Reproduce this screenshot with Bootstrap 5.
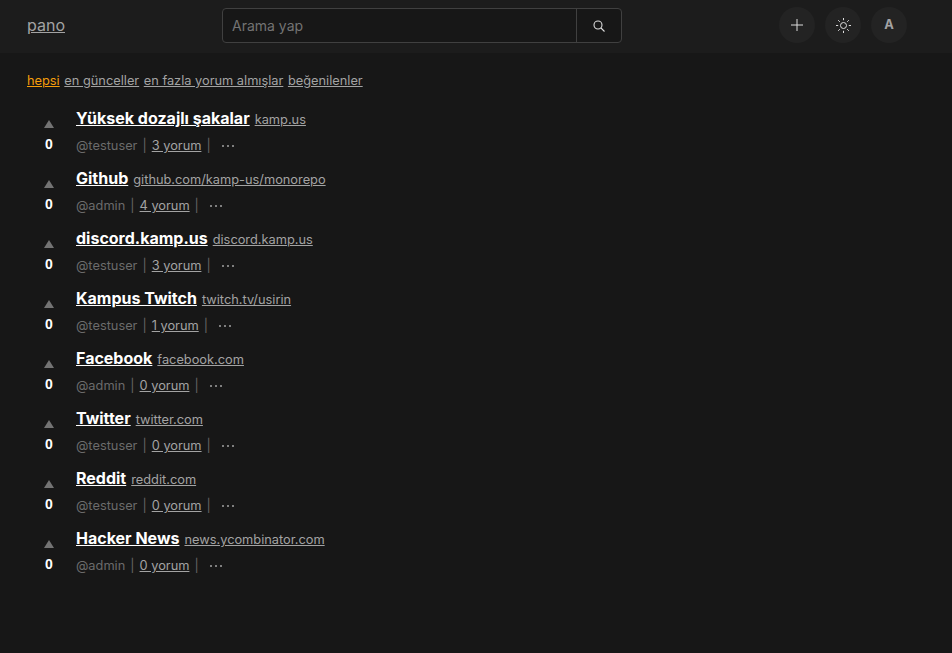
<!doctype html>
<html lang="tr" data-bs-theme="dark">
<head>
<meta charset="utf-8">
<link href="https://cdn.jsdelivr.net/npm/bootstrap@5.3.0/dist/css/bootstrap.min.css" rel="stylesheet">
<style>
body{background:#171717;color:#ddd;font-family:Inter,"Liberation Sans",sans-serif;font-size:14px;min-height:653px}
a{color:#a3a3a3}
.topbar{height:53px;background:#1c1c1c;padding:8px 45px 10px 27px}
.brand{font-size:16px;line-height:35px;color:#a3a3a3;width:195px}
.searchbox{width:400px;height:35px;border:1px solid #404040;border-radius:4px;background:#171717;overflow:hidden}
.searchbox input{background:transparent;border:0;outline:0;color:#ddd;font-size:14px;padding:0 9px;height:33px;min-width:0}
.searchbox input::placeholder{color:#737373;opacity:1}
.searchbtn{width:45px;border-left:1px solid #404040;color:#ddd}
.actions{gap:10px;margin-top:-1px}
.roundbtn{width:36px;height:36px;border-radius:50%;background:#232323;border:0;padding:0;color:#ddd}
.avatarletter{font-size:12.8px;font-weight:700;color:#a3a3a3}
.content{padding:20px 27px 0}
.filters{font-size:12.8px;line-height:16px;gap:4.6px;height:16px}
.active-filter{color:#f59e0b}
.postlist{margin-top:14px}
.post{height:60px}
.votes{width:44px;margin-right:5px;color:#fff;font-family:"Liberation Sans",sans-serif;font-size:14px;font-weight:700;line-height:17px}
.uparrow{width:0;height:0;border-left:5.5px solid transparent;border-right:5.5px solid transparent;border-bottom:8px solid #737373;margin-top:17px;margin-bottom:8px}
.posttitle{font-size:16px;font-weight:700;color:#fff;line-height:20px}
.posthost{font-size:12.8px;color:#a3a3a3}
.titleline{height:20px;gap:5px;margin-top:5px}
.metaline{height:16px;margin-top:10px;font-size:12.8px;line-height:16px}
.author{color:#6b6b6b}
.commentlink{color:#a3a3a3}
.sep{margin:0 5px;color:#666}
.dots{margin-left:5px;color:#a3a3a3}
</style>
</head>
<body>
<header class="topbar d-flex align-items-start">
  <div class="brand"><a href="#">pano</a></div>
  <div class="searchbox d-flex">
    <input class="flex-grow-1" placeholder="Arama yap">
    <div class="searchbtn d-flex align-items-center justify-content-center">
      <svg width="12" height="12" viewBox="0 0 12 12" fill="none" stroke="currentColor" stroke-width="1.1"><circle cx="5" cy="5" r="4"/><path d="M8 8l3.5 3.5"/></svg>
    </div>
  </div>
  <div class="actions ms-auto d-flex align-items-center">
    <button class="roundbtn d-flex align-items-center justify-content-center" aria-label="ekle"><svg width="12" height="12" viewBox="0 0 12 12" stroke="currentColor" stroke-width="1"><path d="M6 0v12M0 6h12"/></svg></button>
    <button class="roundbtn d-flex align-items-center justify-content-center" aria-label="tema"><svg width="15" height="15" viewBox="0 0 15 15" fill="none" stroke="currentColor" stroke-width="1"><circle cx="7.5" cy="7.5" r="3"/><path d="M7.5 0v2.2M7.5 12.8V15M0 7.5h2.2M12.8 7.5H15M2.2 2.2l1.6 1.6M11.2 11.2l1.6 1.6M2.2 12.8l1.6-1.6M11.2 3.8l1.6-1.6"/></svg></button>
    <button class="roundbtn d-flex align-items-center justify-content-center avatarletter">A</button>
  </div>
</header>
<main class="content">
  <nav class="filters d-flex">
    <a class="active-filter" href="#">hepsi</a><a href="#">en günceller</a><a href="#">en fazla yorum almışlar</a><a href="#">beğenilenler</a>
  </nav>
  <div class="postlist">
    <article class="post d-flex"><div class="votes d-flex flex-column align-items-center"><div class="uparrow"></div><div>0</div></div><div><div class="titleline d-flex align-items-baseline"><a class="posttitle" href="#">Yüksek dozajlı şakalar</a><a class="posthost" href="#">kamp.us</a></div><div class="metaline d-flex align-items-center"><span class="author">@testuser</span><span class="sep">|</span><a class="commentlink" href="#">3 yorum</a><span class="sep">|</span><span class="dots d-flex"><svg width="14" height="4" viewBox="0 0 14 4" fill="currentColor"><circle cx="2" cy="2" r="1"/><circle cx="7" cy="2" r="1"/><circle cx="12" cy="2" r="1"/></svg></span></div></div></article>
    <article class="post d-flex"><div class="votes d-flex flex-column align-items-center"><div class="uparrow"></div><div>0</div></div><div><div class="titleline d-flex align-items-baseline"><a class="posttitle" href="#">Github</a><a class="posthost" href="#">github.com/kamp-us/monorepo</a></div><div class="metaline d-flex align-items-center"><span class="author">@admin</span><span class="sep">|</span><a class="commentlink" href="#">4 yorum</a><span class="sep">|</span><span class="dots d-flex"><svg width="14" height="4" viewBox="0 0 14 4" fill="currentColor"><circle cx="2" cy="2" r="1"/><circle cx="7" cy="2" r="1"/><circle cx="12" cy="2" r="1"/></svg></span></div></div></article>
    <article class="post d-flex"><div class="votes d-flex flex-column align-items-center"><div class="uparrow"></div><div>0</div></div><div><div class="titleline d-flex align-items-baseline"><a class="posttitle" href="#">discord.kamp.us</a><a class="posthost" href="#">discord.kamp.us</a></div><div class="metaline d-flex align-items-center"><span class="author">@testuser</span><span class="sep">|</span><a class="commentlink" href="#">3 yorum</a><span class="sep">|</span><span class="dots d-flex"><svg width="14" height="4" viewBox="0 0 14 4" fill="currentColor"><circle cx="2" cy="2" r="1"/><circle cx="7" cy="2" r="1"/><circle cx="12" cy="2" r="1"/></svg></span></div></div></article>
    <article class="post d-flex"><div class="votes d-flex flex-column align-items-center"><div class="uparrow"></div><div>0</div></div><div><div class="titleline d-flex align-items-baseline"><a class="posttitle" href="#">Kampus Twitch</a><a class="posthost" href="#">twitch.tv/usirin</a></div><div class="metaline d-flex align-items-center"><span class="author">@testuser</span><span class="sep">|</span><a class="commentlink" href="#">1 yorum</a><span class="sep">|</span><span class="dots d-flex"><svg width="14" height="4" viewBox="0 0 14 4" fill="currentColor"><circle cx="2" cy="2" r="1"/><circle cx="7" cy="2" r="1"/><circle cx="12" cy="2" r="1"/></svg></span></div></div></article>
    <article class="post d-flex"><div class="votes d-flex flex-column align-items-center"><div class="uparrow"></div><div>0</div></div><div><div class="titleline d-flex align-items-baseline"><a class="posttitle" href="#">Facebook</a><a class="posthost" href="#">facebook.com</a></div><div class="metaline d-flex align-items-center"><span class="author">@admin</span><span class="sep">|</span><a class="commentlink" href="#">0 yorum</a><span class="sep">|</span><span class="dots d-flex"><svg width="14" height="4" viewBox="0 0 14 4" fill="currentColor"><circle cx="2" cy="2" r="1"/><circle cx="7" cy="2" r="1"/><circle cx="12" cy="2" r="1"/></svg></span></div></div></article>
    <article class="post d-flex"><div class="votes d-flex flex-column align-items-center"><div class="uparrow"></div><div>0</div></div><div><div class="titleline d-flex align-items-baseline"><a class="posttitle" href="#">Twitter</a><a class="posthost" href="#">twitter.com</a></div><div class="metaline d-flex align-items-center"><span class="author">@testuser</span><span class="sep">|</span><a class="commentlink" href="#">0 yorum</a><span class="sep">|</span><span class="dots d-flex"><svg width="14" height="4" viewBox="0 0 14 4" fill="currentColor"><circle cx="2" cy="2" r="1"/><circle cx="7" cy="2" r="1"/><circle cx="12" cy="2" r="1"/></svg></span></div></div></article>
    <article class="post d-flex"><div class="votes d-flex flex-column align-items-center"><div class="uparrow"></div><div>0</div></div><div><div class="titleline d-flex align-items-baseline"><a class="posttitle" href="#">Reddit</a><a class="posthost" href="#">reddit.com</a></div><div class="metaline d-flex align-items-center"><span class="author">@testuser</span><span class="sep">|</span><a class="commentlink" href="#">0 yorum</a><span class="sep">|</span><span class="dots d-flex"><svg width="14" height="4" viewBox="0 0 14 4" fill="currentColor"><circle cx="2" cy="2" r="1"/><circle cx="7" cy="2" r="1"/><circle cx="12" cy="2" r="1"/></svg></span></div></div></article>
    <article class="post d-flex"><div class="votes d-flex flex-column align-items-center"><div class="uparrow"></div><div>0</div></div><div><div class="titleline d-flex align-items-baseline"><a class="posttitle" href="#">Hacker News</a><a class="posthost" href="#">news.ycombinator.com</a></div><div class="metaline d-flex align-items-center"><span class="author">@admin</span><span class="sep">|</span><a class="commentlink" href="#">0 yorum</a><span class="sep">|</span><span class="dots d-flex"><svg width="14" height="4" viewBox="0 0 14 4" fill="currentColor"><circle cx="2" cy="2" r="1"/><circle cx="7" cy="2" r="1"/><circle cx="12" cy="2" r="1"/></svg></span></div></div></article>
  </div>
</main>
<script src="https://cdn.jsdelivr.net/npm/bootstrap@5.3.0/dist/js/bootstrap.bundle.min.js"></script>
</body>
</html>
